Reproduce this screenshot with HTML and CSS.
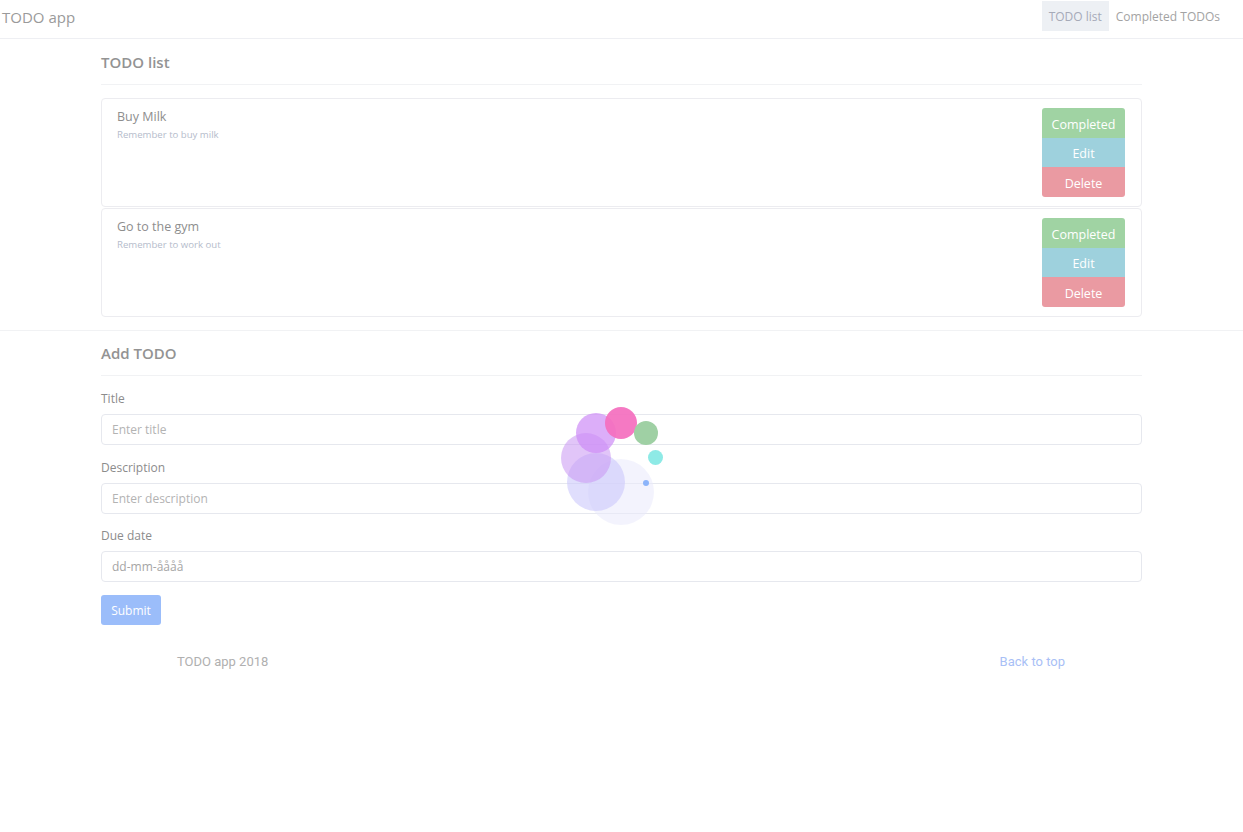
FILE: index.html
```html
<!DOCTYPE html>
<html lang="en">
<head>
    <meta charset="UTF-8">
    <meta name="viewport" content="width=device-width, initial-scale=1.0">
    <title>TODO app</title>
    <link rel="stylesheet" href="styles.css">
</head>
<body>
    <nav class="navbar">
        <a href="#" class="brand">TODO app</a>
        <div class="nav-links">
            <a href="#" class="nav-link active">TODO list</a>
            <a href="#" class="nav-link">Completed TODOs</a>
        </div>
    </nav>

    <section class="section">
        <h2 class="section-title">TODO list</h2>

        <div class="todo-list">
            <div class="todo-card">
                <div class="todo-text">
                    <h3 class="todo-title">Buy Milk</h3>
                    <p class="todo-desc">Remember to buy milk</p>
                </div>
                <div class="todo-actions">
                    <button class="btn btn-success">Completed</button>
                    <button class="btn btn-info">Edit</button>
                    <button class="btn btn-danger">Delete</button>
                </div>
            </div>
            <div class="todo-card">
                <div class="todo-text">
                    <h3 class="todo-title">Go to the gym</h3>
                    <p class="todo-desc">Remember to work out</p>
                </div>
                <div class="todo-actions">
                    <button class="btn btn-success">Completed</button>
                    <button class="btn btn-info">Edit</button>
                    <button class="btn btn-danger">Delete</button>
                </div>
            </div>
        </div>
    </section>

    <div class="divider"></div>

    <section class="section form-section">
        <h2 class="section-title">Add TODO</h2>

        <form class="todo-form">
            <div class="form-group">
                <label for="title">Title</label>
                <input type="text" id="title" class="input-field" placeholder="Enter title">
            </div>
            <div class="form-group">
                <label for="description">Description</label>
                <input type="text" id="description" class="input-field" placeholder="Enter description">
            </div>
            <div class="form-group">
                <label for="dueDate">Due date</label>
                <input type="text" id="dueDate" class="input-field date-field" placeholder="dd-mm-åååå">
            </div>
            <button type="submit" class="btn-submit">Submit</button>
        </form>
    </section>

    <footer class="footer">
        <span>TODO app 2018</span>
        <a href="#" class="back-top">Back to top</a>
    </footer>

    <!-- loading spinner -->
    <div class="loader">
        <span class="dot dot-1"></span>
        <span class="dot dot-2"></span>
        <span class="dot dot-3"></span>
        <span class="dot dot-4"></span>
        <span class="dot dot-5"></span>
        <span class="dot dot-6"></span>
        <span class="dot dot-7"></span>
        <span class="dot dot-8"></span>
    </div>
</body>
</html>
```

FILE: styles.css
```css
* {
    margin: 0;
    padding: 0;
    box-sizing: border-box;
}

body {
    font-family: 'Open Sans', 'Noto Sans', sans-serif;
    background-color: #fff;
    color: #8a8a8a;
    position: relative;
    min-height: 832px;
}

a {
    text-decoration: none;
}

.navbar {
    height: 39px;
    display: flex;
    justify-content: space-between;
    align-items: flex-start;
    border-bottom: 1px solid #eeeff3;
    padding: 0 16px 0 2px;
}

.brand {
    font-size: 15px;
    color: #9a9a9a;
    line-height: 34px;
}

.nav-links {
    display: flex;
    padding-top: 1px;
}

.nav-link {
    font-size: 12px;
    color: #a3a3a3;
    height: 30px;
    line-height: 28px;
    padding: 2px 7px 0;
}

.nav-link.active {
    background-color: #edf0f4;
    color: #a6aab8;
}

.section {
    margin: 0 101px;
}

.section-title {
    font-size: 15px;
    font-weight: 600;
    color: #939393;
    padding: 12px 0 11px;
    border-bottom: 1px solid #f1f2f4;
    margin-bottom: 13px;
    line-height: 22px;
}

.form-section .section-title {
    padding-top: 11px;
}

.todo-list {
    display: flex;
    flex-direction: column;
    gap: 1px;
    padding-bottom: 13px;
}

.todo-card {
    display: flex;
    justify-content: space-between;
    align-items: flex-start;
    border: 1px solid #ececf0;
    border-radius: 4px;
    height: 109px;
    padding: 9px 16px 0 15px;
}

.todo-title {
    font-size: 12.5px;
    font-weight: 400;
    color: #8e8e8e;
    line-height: 18px;
}

.todo-desc {
    font-size: 9.6px;
    color: #b5bccb;
    margin-top: 2px;
}

.todo-actions {
    display: flex;
    flex-direction: column;
    width: 83px;
    border-radius: 3px;
    overflow: hidden;
}

.btn {
    border: none;
    height: 29.5px;
    padding-top: 3px;
    font-family: inherit;
    font-size: 12.5px;
    color: #fff;
    cursor: pointer;
}

.btn-success {
    background-color: #a0d3a3;
}

.btn-info {
    background-color: #9ed1dd;
}

.btn-danger {
    background-color: #ea9aa2;
}

.divider {
    border-top: 1px solid #f1f2f4;
}

.todo-form {
    display: flex;
    flex-direction: column;
}

.form-group {
    display: flex;
    flex-direction: column;
    margin-bottom: 12.5px;
}

.form-group label {
    font-size: 12px;
    color: #8c8c8c;
    line-height: 16px;
    margin-bottom: 7px;
    margin-top: 2px;
}

.input-field {
    height: 31px;
    border: 1px solid #e6e8ee;
    border-radius: 4px;
    padding: 0 10px;
    font-family: inherit;
    font-size: 12px;
    outline: none;
}

.input-field::placeholder {
    color: #b3b3b3;
}

.date-field::placeholder {
    color: #a5a5a5;
}

.btn-submit {
    align-self: flex-start;
    width: 60px;
    height: 30px;
    margin-top: 0.5px;
    border: none;
    border-radius: 3px;
    background-color: #9bbdfa;
    color: #fff;
    font-family: inherit;
    font-size: 12px;
}

.footer {
    display: flex;
    justify-content: space-between;
    margin: 29px 178px 0 177px;
    font-family: Roboto, sans-serif;
    font-size: 13px;
    color: #b0b0b0;
}

.back-top {
    color: #a9bff6;
}

.loader {
    position: absolute;
    left: 540px;
    top: 395px;
    width: 140px;
    height: 140px;
}

.dot {
    position: absolute;
    border-radius: 50%;
}

.dot-1 { left: 48px;  top: 64px; width: 66px; height: 66px; background: rgba(233, 233, 252, 0.55); }
.dot-2 { left: 27px;  top: 58px; width: 58px; height: 58px; background: rgba(204, 200, 252, 0.6); }
.dot-3 { left: 21px;  top: 38px; width: 50px; height: 50px; background: rgba(200, 150, 242, 0.55); }
.dot-4 { left: 36px;  top: 18px; width: 40px; height: 40px; background: rgba(205, 140, 246, 0.7); }
.dot-5 { left: 65px;  top: 12px; width: 32px; height: 32px; background: rgba(244, 110, 190, 0.92); }
.dot-6 { left: 94px;  top: 26px; width: 24px; height: 24px; background: #9fd0a4; }
.dot-7 { left: 108px; top: 55px; width: 15px; height: 15px; background: #8eeae6; }
.dot-8 { left: 103px; top: 85px; width: 6px;  height: 6px;  background: #8cb4fa; }
```
